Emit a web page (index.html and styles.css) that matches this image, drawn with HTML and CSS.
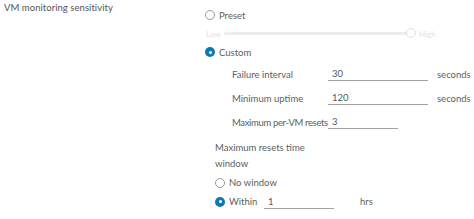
FILE: index.html
```html
<!DOCTYPE html>
<html>
<head>
<meta charset="utf-8">
<link rel="stylesheet" href="styles.css">
</head>
<body>
<div class="page">
  <div class="label-col">VM monitoring sensitivity</div>
  <div class="control-col">
    <div class="radio-row"><span class="radio"></span><span>Preset</span></div>
    <div class="slider-row">
      <span class="s-low">Low</span>
      <span class="track"><span class="thumb"></span></span>
      <span class="s-high">High</span>
    </div>
    <div class="radio-row"><span class="radio checked"></span><span>Custom</span></div>
    <div class="fields">
      <div class="field"><span class="flabel">Failure interval</span><span class="input wide">30</span><span class="unit">seconds</span></div>
      <div class="field"><span class="flabel">Minimum uptime</span><span class="input wide">120</span><span class="unit">seconds</span></div>
      <div class="field"><span class="flabel tight">Maximum per-VM resets</span><span class="input short">3</span></div>
    </div>
    <div class="subsection">
      <div class="sublabel">Maximum resets time<br>window</div>
      <div class="radio-row small"><span class="radio"></span><span>No window</span></div>
      <div class="radio-row small"><span class="radio checked"></span><span class="within">Within</span><span class="input hrs-input">1</span><span class="unit hrs">hrs</span></div>
    </div>
  </div>
</div>
</body>
</html>
```

FILE: styles.css
```css
* { box-sizing: border-box; }
html, body {
  margin: 0;
  padding: 0;
  background: #ffffff;
}
body {
  font-family: Lato, "Open Sans", "Liberation Sans", sans-serif;
  font-size: 9.5px;
  color: #5e5e5e;
}
.page {
  display: flex;
  width: 474px;
  height: 219px;
  overflow: hidden;
}
.label-col {
  width: 205px;
  padding: 2px 0 0 4px;
  line-height: 12px;
  color: #555;
  white-space: nowrap;
  letter-spacing: 0.05px;
}
.control-col {
  display: flex;
  flex-direction: column;
  padding-top: 5px;
  white-space: nowrap;
}
.radio-row {
  display: flex;
  align-items: center;
  height: 20px;
  gap: 4px;
}
.radio {
  width: 10px;
  height: 10px;
  border-radius: 50%;
  border: 1px solid #9a9a9a;
  background: #fff;
  flex: none;
  position: relative;
}
.radio.checked {
  border: none;
  background: #0a79b5;
}
.radio.checked::after {
  content: "";
  position: absolute;
  left: 3.5px;
  top: 3.5px;
  width: 3px;
  height: 3px;
  border-radius: 50%;
  background: #fff;
}
.slider-row {
  display: flex;
  align-items: center;
  height: 17px;
  font-size: 8px;
  color: #e2e2e2;
  margin-left: 1px;
}
.s-low { width: 18px; }
.track {
  position: relative;
  width: 188px;
  height: 3px;
  background: #ededed;
  border-radius: 2px;
}
.thumb {
  position: absolute;
  right: -4px;
  top: -4px;
  width: 10px;
  height: 10px;
  border-radius: 50%;
  border: 1px solid #e0e0e0;
  background: #fff;
}
.s-high { margin-left: 7px; }
.fields {
  display: flex;
  flex-direction: column;
  padding-left: 27px;
}
.field {
  display: flex;
  align-items: center;
  height: 24px;
}
.flabel { width: 96px; flex: none; }
.flabel.tight { letter-spacing: -0.35px; }
.input {
  height: 14px;
  line-height: 13px;
  border-bottom: 1px solid #a0a0a0;
  padding-left: 4px;
  color: #575757;
}
.input.wide { width: 100px; }
.input.short { width: 70px; }
.unit { margin-left: 9px; }
.subsection {
  display: flex;
  flex-direction: column;
  padding-left: 10px;
  margin-top: 6px;
}
.sublabel { line-height: 16px; margin-bottom: 1px; }
.radio-row.small { height: 19px; }
.within { width: 31px; }
.input.hrs-input { width: 70px; }
.unit.hrs { margin-left: 22px; }
```
